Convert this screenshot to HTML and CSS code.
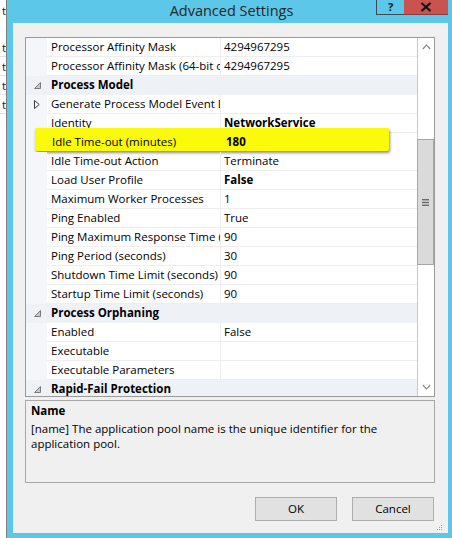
FILE: index.html
```html
<!DOCTYPE html>
<html>
<head>
<meta charset="utf-8">
<link rel="stylesheet" href="styles.css">
</head>
<body>
<div class="screen">
  <div class="behind">
    <div class="bt bt-first">t</div>
    <div class="blist">
      <div class="bt">t</div>
      <div class="bt">t</div>
      <div class="bt">t</div>
      <div class="bt">t</div>
    </div>
  </div>
  <div class="window">
    <div class="titlebar">
      <div></div>
      <div class="title">Advanced Settings</div>
      <div class="tbtns">
        <div class="help">?</div>
        <div class="close">
          <svg width="12" height="10" viewBox="0 0 12 10"><path d="M1.5 1 L10.5 9 M10.5 1 L1.5 9" stroke="#111" stroke-width="2.2" fill="none"/></svg>
        </div>
      </div>
    </div>
    <div class="client">
      <div class="grid">
        <div class="rows">
          <div class="row"><div class="gut"></div><div class="name">Processor Affinity Mask</div><div class="val">4294967295</div></div>
          <div class="row"><div class="gut"></div><div class="name">Processor Affinity Mask (64-bit option)</div><div class="val">4294967295</div></div>
          <div class="row cat"><div class="gut"><svg class="exp" width="7" height="7" viewBox="0 0 7 7"><polygon points="6.5,0.5 6.5,6.5 0.5,6.5" fill="#c8c8c8" stroke="#7a7a7a" stroke-width="1"/></svg></div><div class="name">Process Model</div></div>
          <div class="row"><div class="gut"><svg width="6" height="9" viewBox="0 0 6 9"><polygon points="0.5,0.5 5.2,4.5 0.5,8.5" fill="none" stroke="#3c3c3c" stroke-width="1"/></svg></div><div class="name">Generate Process Model Event Log Entry</div><div class="val"></div></div>
          <div class="row"><div class="gut"></div><div class="name">Identity</div><div class="val b">NetworkService</div></div>
          <div class="row hl"><div class="gut"></div><div class="name">Idle Time-out (minutes)</div><div class="val b">180</div></div>
          <div class="row"><div class="gut"></div><div class="name">Idle Time-out Action</div><div class="val">Terminate</div></div>
          <div class="row"><div class="gut"></div><div class="name">Load User Profile</div><div class="val b">False</div></div>
          <div class="row"><div class="gut"></div><div class="name">Maximum Worker Processes</div><div class="val">1</div></div>
          <div class="row"><div class="gut"></div><div class="name">Ping Enabled</div><div class="val">True</div></div>
          <div class="row"><div class="gut"></div><div class="name">Ping Maximum Response Time (seconds)</div><div class="val">90</div></div>
          <div class="row"><div class="gut"></div><div class="name">Ping Period (seconds)</div><div class="val">30</div></div>
          <div class="row"><div class="gut"></div><div class="name">Shutdown Time Limit (seconds)</div><div class="val">90</div></div>
          <div class="row"><div class="gut"></div><div class="name">Startup Time Limit (seconds)</div><div class="val">90</div></div>
          <div class="row cat"><div class="gut"><svg class="exp" width="7" height="7" viewBox="0 0 7 7"><polygon points="6.5,0.5 6.5,6.5 0.5,6.5" fill="#c8c8c8" stroke="#7a7a7a" stroke-width="1"/></svg></div><div class="name">Process Orphaning</div></div>
          <div class="row"><div class="gut"></div><div class="name">Enabled</div><div class="val">False</div></div>
          <div class="row"><div class="gut"></div><div class="name">Executable</div><div class="val"></div></div>
          <div class="row"><div class="gut"></div><div class="name">Executable Parameters</div><div class="val"></div></div>
          <div class="row cat"><div class="gut"><svg class="exp" width="7" height="7" viewBox="0 0 7 7"><polygon points="6.5,0.5 6.5,6.5 0.5,6.5" fill="#c8c8c8" stroke="#7a7a7a" stroke-width="1"/></svg></div><div class="name">Rapid-Fail Protection</div></div>
        </div>
        <div class="scrollbar">
          <div class="sb-btn"><svg width="9" height="6" viewBox="0 0 9 6"><path d="M0.8 5 L4.5 1.2 L8.2 5" fill="none" stroke="#8a8a8a" stroke-width="1.2"/></svg></div>
          <div class="sb-track">
            <div class="thumb">
              <svg width="7" height="7" viewBox="0 0 7 7"><rect x="0" y="0" width="7" height="1.4" fill="#6a6a6a"/><rect x="0" y="2.8" width="7" height="1.4" fill="#6a6a6a"/><rect x="0" y="5.6" width="7" height="1.4" fill="#6a6a6a"/></svg>
            </div>
          </div>
          <div class="sb-btn"><svg width="9" height="6" viewBox="0 0 9 6"><path d="M0.8 1 L4.5 4.8 L8.2 1" fill="none" stroke="#8a8a8a" stroke-width="1.2"/></svg></div>
        </div>
      </div>
      <div class="desc">
        <div class="desc-title">Name</div>
        <div class="desc-text">[name] The application pool name is the unique identifier for the application pool.</div>
      </div>
      <div class="buttons">
        <div class="btn">OK</div>
        <div class="btn">Cancel</div>
      </div>
      <svg class="grip" width="6" height="6" viewBox="0 0 6 6"><rect x="4" y="0" width="1" height="1" fill="#a0a0a0"/><rect x="2" y="2" width="1" height="1" fill="#a0a0a0"/><rect x="4" y="2" width="1" height="1" fill="#a0a0a0"/><rect x="0" y="4" width="1" height="1" fill="#a0a0a0"/><rect x="2" y="4" width="1" height="1" fill="#a0a0a0"/><rect x="4" y="4" width="1" height="1" fill="#a0a0a0"/></svg>
    </div>
  </div>
</div>
</body>
</html>
```

FILE: styles.css
```css
* { box-sizing: border-box; }
html, body { margin: 0; padding: 0; }
body {
  width: 452px;
  height: 538px;
  overflow: hidden;
  background: #ffffff;
  font-family: "Open Sans", "Noto Sans", "Liberation Sans", sans-serif;
  font-size: 11.5px;
  color: #000;
}
.screen {
  display: flex;
  width: 452px;
  height: 538px;
}
.behind {
  width: 7px;
  flex: none;
  background: #fff;
  border-right: 1px solid #7d7d7d;
  overflow: hidden;
  display: flex;
  flex-direction: column;
}
.bt {
  height: 19px;
  line-height: 19px;
  text-align: right;
  font-size: 11.5px;
  color: #222;
}
.bt-first { margin-top: 1px; }
.blist { margin-top: 18px; }
.blist .bt { border-bottom: 1px solid #e2e2e2; }

.window {
  flex: 1;
  background: #5cc7e8;
  padding: 0 4px 5px 6px;
  display: flex;
  flex-direction: column;
}
.titlebar {
  height: 23px;
  flex: none;
  display: grid;
  grid-template-columns: 1fr auto 1fr;
}
.title {
  font-size: 14.5px;
  line-height: 21px;
  color: #262626;
  padding-left: 2px;
}
.tbtns {
  justify-self: end;
  align-self: start;
  display: flex;
  height: 15px;
}
.help {
  width: 28px;
  height: 15px;
  border: 1px solid #3d4a52;
  border-top: none;
  border-right: none;
  font-weight: bold;
  font-size: 11px;
  line-height: 13px;
  text-align: center;
  color: #111;
}
.close {
  width: 44px;
  height: 15px;
  background: #c8534f;
  border-bottom: 1px solid #8e3a38;
  display: flex;
  align-items: center;
  justify-content: center;
}
.client {
  flex: 1;
  position: relative;
  background: #f0f0f0;
  padding: 14px 13px 12px 12px;
  display: flex;
  flex-direction: column;
}
.grid {
  height: 360px;
  flex: none;
  border: 1px solid #9a9a9a;
  background: #fff;
  display: flex;
  overflow: hidden;
}
.rows {
  flex: 1;
  overflow: hidden;
}
.row {
  display: flex;
  height: 19px;
  line-height: 18px;
  position: relative;
}
.gut {
  width: 21px;
  flex: none;
  background: #f4f6f9;
  display: flex;
  align-items: center;
  justify-content: center;
}
.gut svg { margin-left: 1px; }
.name {
  width: 174px;
  flex: none;
  padding-left: 4px;
  white-space: nowrap;
  overflow: hidden;
  border-bottom: 1px solid #eeeeee;
  border-right: 1px solid #eeeeee;
}
.val {
  flex: 1;
  padding-left: 3px;
  white-space: nowrap;
  overflow: hidden;
  border-bottom: 1px solid #eeeeee;
}
.b { font-weight: bold; }
.cat .gut { background: #eef2f7; }
.cat .name {
  flex: 1;
  width: auto;
  background: #eef2f7;
  font-weight: bold;
  border-right: none;
  border-bottom: 1px solid #eef2f7;
}
.hl::before {
  content: "";
  position: absolute;
  left: 9px;
  top: -5px;
  width: 354px;
  height: 23px;
  background: #fafa0a;
  border-radius: 2px;
  box-shadow: 1px 2px 3px rgba(0,0,0,0.45);
}
.hl .name, .hl .val {
  position: relative;
  z-index: 1;
  border-color: transparent;
}
.hl .name { padding-left: 5px; }
.hl .val { padding-left: 5px; }

.scrollbar {
  width: 17px;
  flex: none;
  border-left: 1px solid #c9c9c9;
  display: flex;
  flex-direction: column;
  background: #fff;
}
.sb-btn {
  height: 18px;
  flex: none;
  display: flex;
  align-items: center;
  justify-content: center;
}
.sb-track {
  flex: 1;
}
.thumb {
  margin-top: 83px;
  margin-left: -1px;
  height: 126px;
  background: #dadada;
  border: 1px solid #a6a6a6;
  display: flex;
  align-items: center;
  justify-content: center;
}
.desc {
  margin-top: 3px;
  height: 83px;
  flex: none;
  border: 1px solid #a8a8a8;
  background: #f0f0f0;
  padding: 2px 5px 0 5px;
  line-height: 15px;
}
.desc-title {
  font-weight: bold;
  margin-bottom: 3px;
}
.desc-text {
  max-width: 360px;
}
.buttons {
  margin-top: 14px;
  display: flex;
  justify-content: flex-end;
  gap: 15px;
  padding-right: 1px;
}
.btn {
  width: 82px;
  height: 24px;
  background: #e1e1e1;
  border: 1px solid #adadad;
  text-align: center;
  line-height: 22px;
  font-size: 11.5px;
}
.grip {
  position: absolute;
  right: 5px;
  bottom: 2px;
}
```
